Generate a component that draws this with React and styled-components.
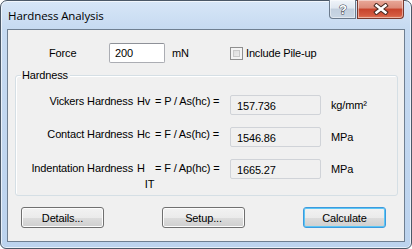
import React from 'react';
import styled, { createGlobalStyle } from 'styled-components';

const Global = createGlobalStyle`
  html, body { margin: 0; padding: 0; background: #ffffff; }
  body { width: 412px; height: 249px; overflow: hidden; }
`;

const Window = styled.div`
  box-sizing: border-box;
  width: 412px;
  height: 249px;
  display: flex;
  flex-direction: column;
  border: 1px solid #4b5867;
  border-radius: 7px 7px 6px 6px;
  background: linear-gradient(#d7e6f7 0px, #c6daf1 28px, #bcd3ee 100%);
  box-shadow: inset 0 0 0 1px rgba(255, 255, 255, 0.65);
  padding: 0 6px 6px 6px;
  font-family: "Liberation Sans", Arial, sans-serif;
  font-size: 11px;
  letter-spacing: -0.15px;
  color: #000;
`;

const TitleBar = styled.div`
  height: 28px;
  display: flex;
  align-items: flex-start;
  flex: none;
`;

const Title = styled.div`
  margin: 7px 0 0 1px;
  font-family: "Open Sans", "Noto Sans", sans-serif;
  font-size: 11.5px;
  letter-spacing: -0.1px;
  line-height: 16px;
  color: #000;
`;

const CaptionButtons = styled.div`
  margin: -1px 1px 0 auto;
  display: flex;
  gap: 1px;
`;

const CaptionButton = styled.div`
  box-sizing: border-box;
  width: ${(p) => p.$w}px;
  height: 19px;
  display: flex;
  align-items: center;
  justify-content: center;
  border: 1px solid ${(p) => (p.$close ? '#7a3a2e' : '#6b7a8c')};
  border-top: none;
  border-radius: ${(p) => (p.$close ? '0 0 4px 0' : '0 0 0 4px')};
  background: ${(p) =>
    p.$close
      ? 'linear-gradient(#e9a99a 0%, #dc8a78 45%, #c7432c 50%, #d45a40 85%, #e07a5a 100%)'
      : 'linear-gradient(#f0f4f9 0%, #dfe7f0 45%, #c2cfde 50%, #c9d6e4 100%)'};
  box-shadow: inset 0 0 0 1px rgba(255, 255, 255, 0.45);
`;

const Client = styled.div`
  flex: 1;
  display: flex;
  flex-direction: column;
  border: 1px solid #6f7f91;
  background: #f0f0f0;
`;

const ForceRow = styled.div`
  display: flex;
  align-items: center;
  height: 20px;
  margin-top: 13px;
  padding-left: 41px;
`;

const FieldLabel = styled.span`
  width: ${(p) => p.$w}px;
  flex: none;
  line-height: 13px;
`;

const TextInput = styled.div`
  box-sizing: border-box;
  width: 56px;
  height: 20px;
  border: 1px solid #abadb3;
  border-top-color: #8e9198;
  border-radius: 2px;
  background: #ffffff;
  padding-left: 5px;
  line-height: 18px;
`;

const Unit = styled.span`
  margin-left: ${(p) => p.$ml || 0}px;
  width: ${(p) => (p.$w ? `${p.$w}px` : 'auto')};
  flex: none;
  line-height: 13px;
`;

const Check = styled.span`
  box-sizing: border-box;
  width: 13px;
  height: 13px;
  border: 1px solid #8f8f8f;
  background: linear-gradient(135deg, #d6d6d6, #f4f4f4);
  box-shadow: inset 0 0 0 2px #f4f4f4, inset 0 0 0 3px #c9c9c9;
  margin-right: 3px;
  flex: none;
`;

const Group = styled.div`
  position: relative;
  margin: 12px 6px 0 7px;
  border: 1px solid #d5dfe5;
  border-radius: 3px;
  box-shadow: inset 1px 1px 0 #ffffff;
  padding: 19px 0 16px 0;
`;

const Legend = styled.span`
  position: absolute;
  top: -7px;
  left: 5px;
  padding: 0 2px 0 1px;
  background: #f0f0f0;
  line-height: 13px;
`;

const Rows = styled.div`
  display: grid;
  grid-template-columns: 117px 22px 75px 91px auto;
  row-gap: 12px;
`;

const Name = styled.span`
  text-align: right;
  white-space: nowrap;
  line-height: 13px;
  padding-top: ${(p) => p.$off}px;
`;

const Symbol = styled.span`
  padding-left: 4px;
  white-space: nowrap;
  line-height: 13px;
  padding-top: ${(p) => p.$off}px;
`;

const Sub = styled.span`
  position: relative;
  top: 16px;
  margin-left: 0;
`;

const Formula = styled.span`
  white-space: nowrap;
  line-height: 13px;
  padding-top: ${(p) => p.$off}px;
`;

const ValueBox = styled.div`
  box-sizing: border-box;
  height: 20px;
  border: 1px solid #d0d3d8;
  border-radius: 2px;
  background: #f0f0f0;
  padding-left: 6px;
  line-height: 18px;
  padding-top: 1px;
`;

const RowUnit = styled.span`
  padding-left: 10px;
  align-self: center;
  line-height: 13px;
`;

const ButtonRow = styled.div`
  display: flex;
  justify-content: space-between;
  margin-top: 11px;
  padding: 0 18px 0 13px;
`;

const Button = styled.div`
  box-sizing: border-box;
  width: 83px;
  height: 21px;
  display: flex;
  align-items: center;
  justify-content: center;
  border: 1px solid ${(p) => (p.$default ? '#3c9ade' : '#707070')};
  border-radius: 3px;
  background: linear-gradient(#f2f2f2 0%, #ebebeb 50%, #dddddd 51%, #cfcfcf 100%);
  box-shadow: ${(p) =>
    p.$default ? 'inset 0 0 0 1px #5cc6f4' : 'inset 0 0 0 1px #fcfcfc'};
`;

const HelpGlyph = () => (
  <svg width="12" height="13" viewBox="0 0 12 13">
    <text
      x="6"
      y="11"
      textAnchor="middle"
      fontFamily="Liberation Sans, Arial, sans-serif"
      fontWeight="bold"
      fontSize="13"
      fill="#ffffff"
      stroke="#3b4350"
      strokeWidth="1"
      paintOrder="stroke"
    >
      ?
    </text>
  </svg>
);

const CloseGlyph = () => (
  <svg width="16" height="12" viewBox="0 0 16 12">
    <path d="M3.5 2.5 L12.5 9.5 M12.5 2.5 L3.5 9.5" stroke="#4a2a22" strokeWidth="4.5" strokeLinecap="square" />
    <path d="M3.5 2.5 L12.5 9.5 M12.5 2.5 L3.5 9.5" stroke="#ffffff" strokeWidth="2.5" strokeLinecap="square" />
  </svg>
);

const rows = [
  { name: 'Vickers Hardness', sym: 'Hv', formula: '= P / As(hc) =', value: '157.736', unit: 'kg/mm²', off: 0 },
  { name: 'Contact Hardness', sym: 'Hc', formula: '= F / As(hc) =', value: '1546.86', unit: 'MPa', off: 1 },
  { name: 'Indentation Hardness', sym: 'H', sub: 'IT', formula: '= F / Ap(hc) =', value: '1665.27', unit: 'MPa', off: 3 },
];

export default function App() {
  return (
    <>
      <Global />
      <Window>
        <TitleBar>
          <Title>Hardness Analysis</Title>
          <CaptionButtons>
            <CaptionButton $w={27}>
              <HelpGlyph />
            </CaptionButton>
            <CaptionButton $w={47} $close>
              <CloseGlyph />
            </CaptionButton>
          </CaptionButtons>
        </TitleBar>
        <Client>
          <ForceRow>
            <FieldLabel $w={60}>Force</FieldLabel>
            <TextInput>200</TextInput>
            <Unit $ml={7} $w={58}>mN</Unit>
            <Check />
            <Unit>Include Pile-up</Unit>
          </ForceRow>
          <Group>
            <Legend>Hardness</Legend>
            <Rows>
              {rows.map((r) => (
                <React.Fragment key={r.name}>
                  <Name $off={r.off}>{r.name}</Name>
                  <Symbol $off={r.off}>
                    {r.sym}
                    {r.sub && <Sub>{r.sub}</Sub>}
                  </Symbol>
                  <Formula $off={r.off}>{r.formula}</Formula>
                  <ValueBox>{r.value}</ValueBox>
                  <RowUnit>{r.unit}</RowUnit>
                </React.Fragment>
              ))}
            </Rows>
          </Group>
          <ButtonRow>
            <Button>Details...</Button>
            <Button>Setup...</Button>
            <Button $default>Calculate</Button>
          </ButtonRow>
        </Client>
      </Window>
    </>
  );
}
